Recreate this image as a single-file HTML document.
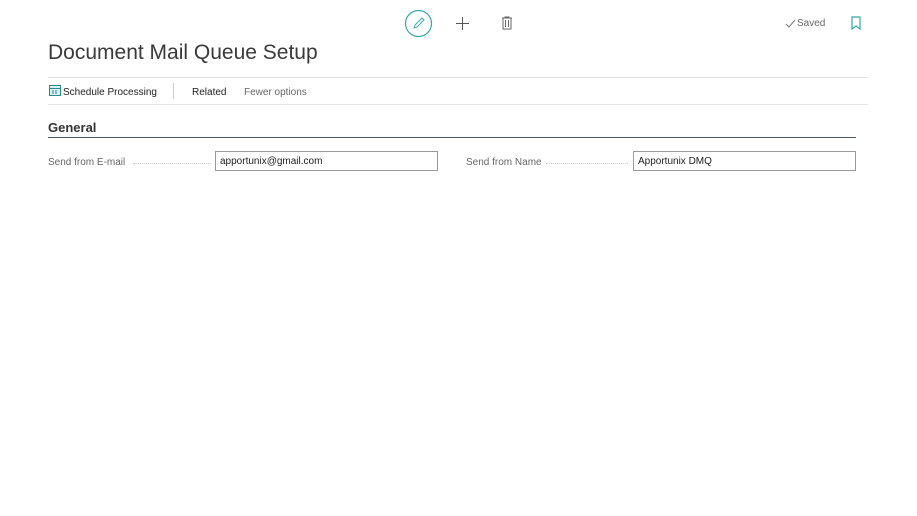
<!DOCTYPE html>
<html><head><meta charset="utf-8"><style>
body{margin:0;width:917px;height:516px;background:#fff;font-family:"Liberation Sans",sans-serif;position:relative;overflow:hidden;color:#212121}
.a{position:absolute}
.t{font-size:10px;white-space:nowrap}
.dots{position:absolute;border-bottom:1px dotted #ccc;height:0}
.inp{position:absolute;border:1px solid #999;height:20px;font-size:10px;line-height:20px;padding-left:4px;box-sizing:border-box;color:#212121}
</style></head><body>
<svg class="a" style="left:404px;top:9px" width="29" height="29"><circle cx="14.5" cy="14.5" r="13" fill="none" stroke="#36a9a9" stroke-width="1.2"/><path d="M10 19l1-3 7-7 2 2-7 7z" fill="none" stroke="#36a9a9" stroke-width="1"/></svg>
<svg class="a" style="left:456px;top:17px" width="13" height="13"><path d="M6.5 0v13M0 6.5h13" stroke="#555" stroke-width="1"/></svg>
<svg class="a" style="left:501px;top:16px" width="12" height="14"><path d="M1 2h10M4 2V1h4v1M2 2v11h8V2M4.5 4v7M7.5 4v7" fill="none" stroke="#666" stroke-width="1"/></svg>
<svg class="a" style="left:785px;top:19px" width="11" height="9"><path d="M1 5l3 3 6-7" fill="none" stroke="#777" stroke-width="1"/></svg>
<div class="a t" style="left:797px;top:18px;color:#666">Saved</div>
<svg class="a" style="left:851px;top:16px" width="10" height="14"><path d="M1 1h8v12l-4-3-4 3z" fill="none" stroke="#36a9a9" stroke-width="1.2"/></svg>
<div class="a" style="left:48px;top:41px;font-size:21px;color:#3a3a3a">Document Mail Queue Setup</div>
<div class="a" style="left:48px;top:77px;width:820px;border-top:1px solid #e3e3e3"></div>
<svg class="a" style="left:49px;top:85px" width="12" height="11"><rect x="0.5" y="0.5" width="11" height="10" fill="#d9f0f0" stroke="#2a8a8a"/><path d="M0 3.5h12M3 6h2M6 6h2M3 8h2M6 8h2" stroke="#2a8a8a"/></svg>
<div class="a t" style="left:63px;top:87px">Schedule Processing</div>
<div class="a" style="left:173px;top:83px;height:16px;border-left:1px solid #ccc"></div>
<div class="a t" style="left:192px;top:87px">Related</div>
<div class="a t" style="left:244px;top:87px;color:#666">Fewer options</div>
<div class="a" style="left:48px;top:104px;width:820px;border-top:1px solid #e3e3e3"></div>
<div class="a" style="left:48px;top:120px;font-size:13px;font-weight:bold;color:#333">General</div>
<div class="a" style="left:48px;top:137px;width:808px;border-top:1.5px solid #4a5a6a"></div>
<div class="a t" style="left:48px;top:157px;color:#666">Send from E-mail</div>
<div class="dots" style="left:133px;top:163px;width:78px"></div>
<div class="inp" style="left:215px;top:151px;width:223px">apportunix@gmail.com</div>
<div class="a t" style="left:466px;top:157px;color:#666">Send from Name</div>
<div class="dots" style="left:546px;top:163px;width:82px"></div>
<div class="inp" style="left:633px;top:151px;width:223px">Apportunix DMQ</div>
</body></html>
